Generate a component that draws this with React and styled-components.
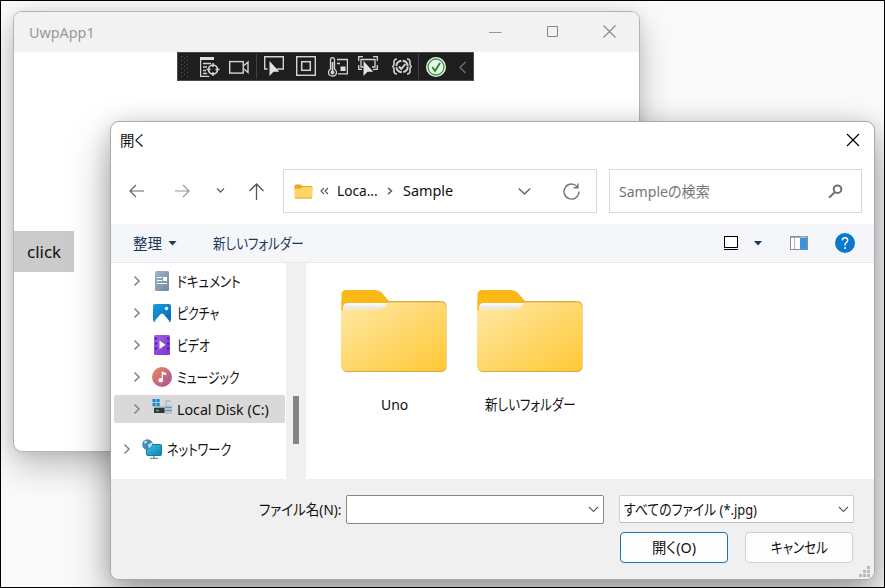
import React, { useLayoutEffect, useRef } from 'react';
import styled, { createGlobalStyle } from 'styled-components';

const Global = createGlobalStyle`
  * { box-sizing: border-box; }
  html, body { margin: 0; padding: 0; overflow: hidden; }
  body { font-family: "Noto Sans", "Noto Sans CJK JP", sans-serif; font-size: 15px; color: #111; }
  svg { display: block; flex: none; }
  button { font: inherit; color: inherit; margin: 0; }
`;

const Desktop = styled.main`
  position: relative;
  width: 885px;
  height: 588px;
  border: 1px solid #000;
  background: #fafafa;
  overflow: hidden;
`;

const Window = styled.section`
  position: absolute;
  left: ${p => p.$x}px;
  top: ${p => p.$y}px;
  width: ${p => p.$w}px;
  height: ${p => p.$h}px;
  display: flex;
  flex-direction: column;
  border: 1px solid ${p => (p.$active ? '#a9aba9' : '#b3b5b3')};
  border-radius: 9px;
  background: #fff;
  overflow: hidden;
  box-shadow: ${p => (p.$active
    ? '0 20px 42px rgba(0,0,0,.34), 0 2px 22px rgba(0,0,0,.15)'
    : '0 14px 34px rgba(0,0,0,.24), 0 1px 14px rgba(0,0,0,.09)')};
`;

/* Condensed UI label: proportional kana, squeezed to the width it is given. */
const LabelBox = styled.span`
  display: block;
  flex: none;
  width: ${p => p.$w}px;
  height: 20px;
  line-height: ${p => (p.$raised ? 18 : 20)}px;
  white-space: nowrap;
  text-align: left;
  font-size: ${p => p.$size || 15}px;
  color: ${p => p.$color || '#111'};
  margin-left: ${p => p.$ml || 0}px;
`;
const LabelText = styled.span`
  display: inline-block;
  transform-origin: 0 50%;
  font-feature-settings: "palt";
`;
function Label({ w, size, color, ml, raised, children }) {
  const ref = useRef(null);
  useLayoutEffect(() => {
    const el = ref.current;
    el.style.transform = `scaleX(${w / el.offsetWidth})`;
  }, [w, children]);
  return (
    <LabelBox $w={w} $size={size} $color={color} $ml={ml} $raised={raised}>
      <LabelText ref={ref}>{children}</LabelText>
    </LabelBox>
  );
}

const AppTitleBar = styled.header`
  height: 40px;
  flex: none;
  display: flex;
  align-items: center;
  justify-content: space-between;
  padding: 1px 23px 0 15px;
  background: #f2f2f2;
`;
const Captions = styled.div`
  display: flex;
  gap: 44px;
  padding-bottom: 3px;
`;
const AppBody = styled.div`
  flex: 1;
  display: flex;
  flex-direction: column;
  align-items: flex-start;
`;
const DebugBar = styled.div`
  width: 297px;
  height: 29px;
  margin-left: 163px;
  padding-left: 3px;
  display: flex;
  align-items: center;
  border: 1px solid #4a4a4a;
  background: #1e1e1e;
`;
const Slot = styled.span`
  margin-left: ${p => p.$ml}px;
`;
const BarDivider = styled.span`
  width: 1px;
  height: 25px;
  margin-left: ${p => p.$ml}px;
  background: #424245;
`;
const ClickButton = styled.button`
  width: 60px;
  height: 41px;
  margin-top: 150px;
  padding: 3px 0 0 13px;
  border: 0;
  background: #cbcbcb;
  display: flex;
  align-items: center;
`;

const DialogTitle = styled.header`
  height: 37px;
  flex: none;
  display: flex;
  align-items: center;
  justify-content: space-between;
  padding: 0 14px 2px 9px;
`;
const NavRow = styled.div`
  height: 65px;
  flex: none;
  display: flex;
  align-items: flex-start;
  padding: 10px 12px 0 17px;
`;
const NavButtons = styled.div`
  width: 155px;
  height: 44px;
  flex: none;
  display: flex;
  align-items: center;
`;
const Field = styled.div`
  width: ${p => p.$w}px;
  height: 44px;
  flex: none;
  display: flex;
  align-items: center;
  margin-left: ${p => p.$ml || 0}px;
  padding: 0 0 0 ${p => p.$pl}px;
  border: 1px solid #d9d9d9;
  background: #fff;
`;
const CommandBar = styled.div`
  height: 39px;
  flex: none;
  display: flex;
  align-items: center;
  padding: 0 0 0 22px;
  border-bottom: 1px solid #e6e8ea;
  background: #f4f6f9;
`;
const Body = styled.div`
  height: 216px;
  flex: none;
  display: flex;
`;
const Tree = styled.nav`
  width: 175px;
  flex: none;
  padding: 2px 1px 0 3px;
`;
const TreeRow = styled.div`
  height: ${p => (p.$root ? 28 : 32)}px;
  padding: 2px 0;
  margin-top: ${p => (p.$root ? 8 : 0)}px;
`;
const TreeItem = styled.div`
  height: 28px;
  display: flex;
  align-items: center;
  padding-left: ${p => (p.$root ? 8 : 18)}px;
  border-radius: 2px;
  background: ${p => (p.$selected ? '#d9d9d9' : 'transparent')};
`;
const ScrollTrack = styled.div`
  width: 20px;
  flex: none;
  padding: 133px 0 0 7px;
  background: #f0f0f0;
`;
const ScrollThumb = styled.div`
  width: 6px;
  height: 48px;
  background: #858585;
`;
const Files = styled.div`
  flex: 1;
  display: flex;
  margin-left: 2px;
  padding: 26px 0 0 32px;
  gap: 30px;
  border-left: 1px solid #fafafa;
`;
const Tile = styled.div`
  width: 106px;
  display: flex;
  flex-direction: column;
  align-items: center;
  gap: 22px;
`;
const Footer = styled.footer`
  flex: 1;
  background: #f0f0f0;
  padding: 16px 3px 0 0;
  display: flex;
  flex-direction: column;
`;
const FooterRow = styled.div`
  display: flex;
  align-items: center;
  height: ${p => p.$h}px;
  margin-top: ${p => p.$mt || 0}px;
  padding-left: ${p => p.$pl}px;
`;
const Combo = styled.div`
  width: ${p => p.$w}px;
  height: ${p => p.$h}px;
  margin-left: ${p => p.$ml}px;
  align-self: flex-start;
  display: flex;
  align-items: center;
  justify-content: space-between;
  padding: 0 4px;
  border: 1px solid ${p => (p.$strong ? '#858985' : '#cfcfcf')};
  border-bottom-color: ${p => (p.$strong ? '#858985' : '#bdbdbd')};
  border-radius: 2px;
  background: #fff;
`;
const DialogButton = styled.button`
  width: 108px;
  height: 31px;
  margin-left: ${p => p.$ml}px;
  padding: 0;
  display: flex;
  align-items: center;
  justify-content: center;
  border: 1px solid ${p => (p.$primary ? '#1a73bb' : '#d0d0d0')};
  border-radius: 4px;
  background: #fdfdfd;
`;
const GripRow = styled.div`
  display: flex;
  justify-content: flex-end;
  margin-top: 3px;
`;

const Line = ({ w, h, d, color = '#777', sw = 1.2, ...rest }) => (
  <svg width={w} height={h} viewBox={`0 0 ${w} ${h}`} fill="none" stroke={color} strokeWidth={sw} {...rest}>
    <path d={d} />
  </svg>
);
const DebugIcon = ({ children, w = 20 }) => (
  <svg width={w} height="22" viewBox={`0 0 ${w} 22`} fill="none" stroke="#d4d4d4" strokeWidth="1.3">{children}</svg>
);
const cursor = 'M5.5 5v15l4-4.300h5.800z';

const Chevron = ({ color = '#888' }) => <Line w={8} h={12} d="M1.5 1.5 6 6 1.5 10.5" color={color} sw={1.6} />;

const Folder = () => (
  <svg width="106" height="84" viewBox="0 0 106 84">
    <defs>
      <linearGradient id="front" x1="0" y1="0" x2="1" y2="1">
        <stop offset="0" stopColor="#ffe9a6" /><stop offset="1" stopColor="#ffc835" />
      </linearGradient>
      <linearGradient id="paper" x1="0" y1="0" x2="0" y2="1">
        <stop offset="0" stopColor="#fff" /><stop offset=".55" stopColor="#e8eaf0" /><stop offset="1" stopColor="#ffe7a0" />
      </linearGradient>
    </defs>
    <path d="M.5 25V6q0-5 5-5H34q4 0 6.500 2.500L48 12H20L4 22z" fill="#fbb917" />
    <path d="M30 12h70q5.500 0 5.500 6v59q0 6-6 6h-93q-6 0-6-6V25z" fill="#dba83b" />
    <path d="M.5 20q0-6 6-6h38l4-.8h51q5.500 0 5.500 5.500V76q0 6-6 6h-93q-6 0-6-6z" fill="url(#front)" />
    <path d="M.5 12h47q-2 2-4 2H8q-6 0-6 6l-1.500 3z" fill="#fbb917" />
    <path d="M2 21.500V19q0-5 5-5h40l-3 3.500q-2.500 3-6.500 3H6z" fill="url(#paper)" />
  </svg>
);
const SmallFolder = () => (
  <svg width="19" height="15" viewBox="0 0 19 15">
    <path d="M.5 2q0-1.500 1.500-1.500h4.500L8.500 2H17q1.500 0 1.500 1.500V6H.5z" fill="#eda61b" />
    <path d="M.5 4.500h6L8.500 3H18q.5 0 .5.700V13q0 1.200-1 1.200h-16q-1 0-1-1.200z" fill="#fdd567" />
    <path d="M1 14h17" stroke="#dca32e" />
  </svg>
);

const DocIcon = () => (
  <svg width="20" height="20" viewBox="0 0 20 20">
    <defs><linearGradient id="doc" x1="0" x2="1" y2="1"><stop stopColor="#a2b6c6" /><stop offset="1" stopColor="#6f87a0" /></linearGradient></defs>
    <rect x="3" width="14" height="20" rx="1.500" fill="url(#doc)" />
    <path d="M5 6.500h5M5 9.500h5M5 12.500h10" stroke="#fff" strokeWidth="1.200" /><rect x="11" y="6" width="4" height="4" fill="#fff" />
  </svg>
);
const PictureIcon = () => (
  <svg width="20" height="20" viewBox="0 0 20 20">
    <defs><linearGradient id="pic" x1="0" x2="1" y2="1"><stop stopColor="#16a0df" /><stop offset="1" stopColor="#0667b5" /></linearGradient></defs>
    <rect x="1" y="1" width="18" height="18" rx="2" fill="url(#pic)" />
    <path d="m2.500 18 6-6.700q1.500-1.500 3 0l6 6.700q-1 1-2 1h-11q-1 0-2-1z" fill="#fff" /><circle cx="14.500" cy="5.500" r="1.700" fill="#fff" />
  </svg>
);
const VideoIcon = () => (
  <svg width="20" height="20" viewBox="0 0 20 20">
    <defs><linearGradient id="vid" x1="0" x2="1" y2="1"><stop stopColor="#a45ee8" /><stop offset="1" stopColor="#7a35cf" /></linearGradient></defs>
    <rect x="2" width="16" height="20" rx="1.500" fill="url(#vid)" />
    <path d="M4 2.500v15M16 2.500v15" stroke="#45207f" strokeWidth="2" strokeDasharray="2 3" />
    <path d="M7.500 5.500v8.500l6-4.250z" fill="#fff" />
  </svg>
);
const MusicIcon = () => (
  <svg width="20" height="20" viewBox="0 0 20 20">
    <defs><linearGradient id="mus" x1="0" x2="1" y2="1"><stop stopColor="#ed8a58" /><stop offset="1" stopColor="#a75099" /></linearGradient></defs>
    <circle cx="10" cy="10" r="10" fill="url(#mus)" />
    <path d="M9.700 13V4.500l4.500 1.500v2.300L11 7.300V13z" fill="#fff" /><circle cx="8.700" cy="13.200" r="2.300" fill="#fff" />
  </svg>
);
const DiskIcon = () => (
  <svg width="22" height="20" viewBox="0 0 22 20">
    <path d="M.5 0h3.200v3.200H.5zM4.500 0h3.200v3.200H4.500zM.5 4h3.200v3.200H.5zM4.500 4h3.200v3.200H4.500z" fill="#1686d3" />
    <path d="m3 7.500-1 2h11v-2z" fill="#9da3a5" /><rect x="2" y="9" width="12" height="5" fill="#2e3735" /><path d="M4 11.500h3" stroke="#34d44a" strokeWidth="1.600" />
    <path d="M14 6V3.500q0-2 2-2t2 2" fill="none" stroke="#a6b9c5" strokeWidth="1.400" />
    <rect x="12.500" y="6" width="7.500" height="9" rx="1" fill="#b0c5d2" /><path d="M13 8.500h7M13 11.500h7" stroke="#738d9d" />
  </svg>
);
const NetworkIcon = () => (
  <svg width="20" height="20" viewBox="0 0 20 20">
    <defs><linearGradient id="net" x1="0" x2="1" y2="1"><stop stopColor="#39cde2" /><stop offset="1" stopColor="#087eb9" /></linearGradient></defs>
    <rect x="4.500" y="5.500" width="15" height="11" rx="1" fill="url(#net)" stroke="#1976a5" />
    <path d="M12 17v2M8 19.300h8" stroke="#788a94" strokeWidth="1.300" />
    <circle cx="5.500" cy="5.500" r="5.300" fill="#438eb6" /><path d="M2 2.500q4-2 3 1L2.500 5zM6 5.500l4-2v3L7 9.500z" fill="#b8dfe9" />
  </svg>
);

const places = [
  { name: 'ドキュメント', w: 64, Icon: DocIcon },
  { name: 'ピクチャ', w: 42, Icon: PictureIcon },
  { name: 'ビデオ', w: 33, Icon: VideoIcon },
  { name: 'ミュージック', w: 62, Icon: MusicIcon },
  { name: 'Local Disk (C:)', w: 92, Icon: DiskIcon, selected: true },
  { name: 'ネットワーク', w: 64, Icon: NetworkIcon, root: true },
];

const GripDots = () => (
  <svg width="9" height="23" viewBox="0 0 9 23" fill="#58585b">
    {[0, 1, 2, 3, 4, 5].map(i => (
      <g key={i}>
        <rect x="0" y={i * 4 + 1} width="1" height="1" /><rect x="6" y={i * 4 + 1} width="1" height="1" />
        {i < 5 && <rect x="3" y={i * 4 + 3} width="1" height="1" />}
      </g>
    ))}
  </svg>
);

function DebugToolbar() {
  return (
    <DebugBar>
      <GripDots />
      <Slot $ml={10}><DebugIcon>
        <path d="M0 1h14v3H0z" fill="#dedede" stroke="none" /><path d="M.6 4v16.400H9M3 7.500h8M3 11h4M3 14.500h3M3 17.500h4" />
        <circle cx="13" cy="13.500" r="4.500" strokeWidth="1.700" /><path d="M13 7v4M13 16v4M6.500 13.500h4M15.500 13.500h4" strokeWidth="1.500" />
      </DebugIcon></Slot>
      <Slot $ml={9}><DebugIcon><rect x=".7" y="5.600" width="13.500" height="11.500" strokeWidth="1.400" /><path d="m15 9.500 4-3.500v10.500l-4-3.500" strokeWidth="1.400" /></DebugIcon></Slot>
      <BarDivider $ml={7} />
      <Slot $ml={7}><DebugIcon><path d="M3.500 13H.7V.7h18.600V13H13" strokeWidth="1.400" /><path d={cursor} fill="#e2e2e2" stroke="none" /></DebugIcon></Slot>
      <Slot $ml={12}><DebugIcon><rect x=".7" y=".7" width="18.600" height="18.600" strokeWidth="1.400" /><rect x="5.700" y="5.700" width="8.600" height="8.600" strokeWidth="1.500" /></DebugIcon></Slot>
      <Slot $ml={12}><DebugIcon>
        <path d="M2.500 13V4q0-2.300 2-2.300t2 2.300v9q2 1.300 2 3.500 0 3.500-4 3.500t-4-3.500q0-2.200 2-3.500z" /><path d="M4.500 6v10" strokeWidth="1.800" /><circle cx="4.500" cy="16.500" r="2" fill="#cfcfcf" stroke="none" />
        <path d="M9 3.500h10.400v14.300H10" /><path d="M9 7.500h3" /><rect x="12.500" y="10.500" width="5" height="4.500" fill="#dedede" stroke="none" />
      </DebugIcon></Slot>
      <Slot $ml={10}><DebugIcon>
        <path d="M.7 5V.7H5M15 .7h4.300V5M.7 9v4.300H4M19.300 9v4.300H15M5.500 11H3V3.500h14V11h-3" strokeWidth="1.300" /><path d={cursor} fill="#e2e2e2" stroke="none" />
      </DebugIcon></Slot>
      <Slot $ml={14}><DebugIcon>
        <path d="M5 3q-3 0-3 3v2q0 2-1.500 2.500Q2 11 2 13v2q0 3 3 3M15 3q3 0 3 3v2q0 2 1.500 2.500Q18 11 18 13v2q0 3-3 3" strokeWidth="1.600" />
        <circle cx="10" cy="10.500" r="5.700" strokeWidth="2" strokeDasharray="7.500 1.450" /><path d="m7 10.500 2.300 2.500 4-5" strokeWidth="2" />
      </DebugIcon></Slot>
      <BarDivider $ml={6} />
      <Slot $ml={7}><DebugIcon>
        <circle cx="10" cy="11" r="10" fill="#eaf5ea" stroke="none" /><circle cx="10" cy="11" r="8" stroke="#3c9440" strokeWidth="1.300" /><path d="m6.300 11 2.700 4 5-8" stroke="#2d8a32" strokeWidth="2" />
      </DebugIcon></Slot>
      <Slot $ml={13}><DebugIcon w={10}><path d="M6.500 6 1 11.500 6.500 17" stroke="#6f6f6f" strokeWidth="1.400" /></DebugIcon></Slot>
    </DebugBar>
  );
}

export default function App() {
  return (
    <>
      <Global />
      <Desktop>
        <Window $x={12} $y={10} $w={627} $h={441}>
          <AppTitleBar>
            <Label raised w={66} color="#999">UwpApp1</Label>
            <Captions>
              <Line w={13} h={13} d="M0 7.500h12.500" color="#999" sw={1} />
              <Line w={13} h={13} d="M1.500 1.500h10v10h-10z" color="#888" sw={1} />
              <Line w={13} h={13} d="m.5.500 12 12m0-12-12 12" color="#888" sw={1.1} />
            </Captions>
          </AppTitleBar>
          <AppBody>
            <DebugToolbar />
            <ClickButton><Label raised w={34} size={17}>click</Label></ClickButton>
          </AppBody>
        </Window>

        <Window $active $x={109} $y={120} $w={765} $h={459}>
          <DialogTitle>
            <Label w={24}>開く</Label>
            <Line w={14} h={14} d="m1 1 12 12m0-12L1 13" color="#000" />
          </DialogTitle>
          <NavRow>
            <NavButtons>
              <Slot $ml={1}><Line w={15} h={14} d="M15 7H1.200M7 1 1 7l6 6" color="#666" /></Slot>
              <Slot $ml={31}><Line w={15} h={14} d="M0 7h13.800M8 1l6 6-6 6" color="#999" /></Slot>
              <Slot $ml={26}><Line w={9} h={8} d="m1 1.500 3.500 3.500L8 1.500" color="#666" sw={1.4} /></Slot>
              <Slot $ml={24}><Line w={16} h={17} d="M7.500 17V1.200M.5 8l7-7 7 7" color="#555" sw={1.3} /></Slot>
            </NavButtons>
            <Field $w={314} $pl={10}>
              <SmallFolder />
              <Slot $ml={7}><Line w={9} h={9} d="M4 1 1 4l3 3M8 1 5 4l3 3" color="#555" sw={1.1} /></Slot>
              <Label raised ml={8} w={41}>Loca...</Label>
              <Slot $ml={9}><Line w={6} h={8} d="m1 .8 3.500 3.200L1 7.200" color="#555" sw={1.4} /></Slot>
              <Label raised ml={10} w={50}>Sample</Label>
              <Slot $ml={65}><Line w={13} h={8} d="m.8 1.500 5.700 5.500L12.200 1.500" color="#666" sw={1.4} /></Slot>
              <Slot $ml={32}><Line w={17} h={17} d="M14.800 4.500A7.500 7.500 0 1 0 16 8.500M15 .5v4.300h-4.500" color="#777" sw={1.4} /></Slot>
            </Field>
            <Field $w={253} $ml={12} $pl={9}>
              <Label w={91} color="#767676">Sampleの検索</Label>
              <Slot $ml={118}>
                <svg width="15" height="15" viewBox="0 0 15 15" fill="none" stroke="#707070"><circle cx="9.500" cy="5.200" r="3.800" strokeWidth="2" /><path d="M6.700 8.300 1 13.700" strokeWidth="2" /></svg>
              </Slot>
            </Field>
          </NavRow>
          <CommandBar>
            <Label w={29} color="#20365a">整理</Label>
            <Slot $ml={6}><svg width="9" height="5" viewBox="0 0 9 5"><path d="M.5 0h8l-4 4.500z" fill="#20365a" /></svg></Slot>
            <Label ml={36} w={91} color="#20365a">新しいフォルダー</Label>
            <Slot $ml={420}>
              <svg width="15" height="15" viewBox="0 0 15 15" shapeRendering="crispEdges"><path d="M.5.500h13v11H.5z" fill="#fff" stroke="#000" /><path d="M0 13.500h14" stroke="#000" /></svg>
            </Slot>
            <Slot $ml={15}><svg width="8" height="5" viewBox="0 0 8 5"><path d="M0 0h8L4 4.500z" fill="#20365a" /></svg></Slot>
            <Slot $ml={28}>
              <svg width="18" height="14" viewBox="0 0 18 14"><rect x=".5" y=".5" width="17" height="13" fill="#fff" stroke="#868d95" /><path d="M1 1.200h16" stroke="#868d95" /><path d="M4.500 2v11" stroke="#b4b9bf" /><rect x="10" y="2" width="7" height="11.500" fill="#3c92dc" /><path d="M11 1h5" stroke="#ddd" strokeDasharray="1 1" /></svg>
            </Slot>
            <Slot $ml={27}>
              <svg width="20" height="20" viewBox="0 0 20 20"><circle cx="10" cy="10" r="10" fill="#0b78cf" /><path d="M7.300 7.500q0-2.800 2.700-2.800t2.700 2.500q0 1.400-1.500 2.400-1.200.8-1.200 2.300v.6" fill="none" stroke="#fff" strokeWidth="1.400" /><circle cx="10" cy="15" r="1" fill="#fff" /></svg>
            </Slot>
          </CommandBar>
          <Body>
            <Tree>
              {places.map(({ name, w, Icon, selected, root }) => (
                <TreeRow key={name} $root={root}>
                  <TreeItem $root={root} $selected={selected}>
                    <Slot $ml={1}><Chevron /></Slot>
                    <Slot $ml={11}><Icon /></Slot>
                    <Label ml={selected ? 3 : 5} w={w}>{name}</Label>
                  </TreeItem>
                </TreeRow>
              ))}
            </Tree>
            <ScrollTrack><ScrollThumb /></ScrollTrack>
            <Files>
              <Tile><Folder /><Label raised w={27}>Uno</Label></Tile>
              <Tile><Folder /><Label raised w={91}>新しいフォルダー</Label></Tile>
            </Files>
          </Body>
          <Footer>
            <FooterRow $h={29} $pl={148}>
              <Label raised w={82}>ファイル名(N):</Label>
              <Combo $strong $ml={5} $w={258} $h={29}>
                <span />
                <Line w={11} h={7} d="m1 1 4.500 4.500L10 1" color="#555" sw={1.1} />
              </Combo>
              <Combo $ml={15} $w={235} $h={28}>
                <Label w={133}>すべてのファイル (*.jpg)</Label>
                <Line w={11} h={7} d="m1 1 4.500 4.500L10 1" color="#555" sw={1.1} />
              </Combo>
            </FooterRow>
            <FooterRow $h={31} $mt={8} $pl={509}>
              <DialogButton $primary><Label raised w={44}>開く(O)</Label></DialogButton>
              <DialogButton $ml={17}><Label raised w={57}>キャンセル</Label></DialogButton>
            </FooterRow>
            <GripRow>
              <svg width="12" height="12" viewBox="0 0 12 12" fill="#b9b9b9">
                <path d="M8 0h3v3H8zM4 4h3v3H4zM8 4h3v3H8zM0 8h3v3H0zM4 8h3v3H4zM8 8h3v3H8z" />
              </svg>
            </GripRow>
          </Footer>
        </Window>
      </Desktop>
    </>
  );
}
